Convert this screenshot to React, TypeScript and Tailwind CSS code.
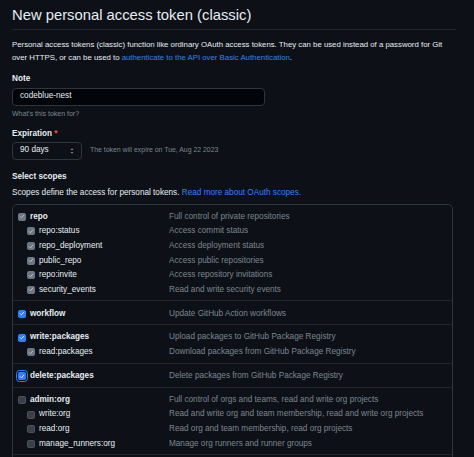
import React from 'react';

type Scope = {
  name: string;
  desc: string;
  sub?: boolean;
  state: 'gray' | 'blue' | 'off';
  focus?: boolean;
};

const groups: Scope[][] = [
  [
    { name: 'repo', desc: 'Full control of private repositories', state: 'gray' },
    { name: 'repo:status', desc: 'Access commit status', sub: true, state: 'gray' },
    { name: 'repo_deployment', desc: 'Access deployment status', sub: true, state: 'gray' },
    { name: 'public_repo', desc: 'Access public repositories', sub: true, state: 'gray' },
    { name: 'repo:invite', desc: 'Access repository invitations', sub: true, state: 'gray' },
    { name: 'security_events', desc: 'Read and write security events', sub: true, state: 'gray' },
  ],
  [{ name: 'workflow', desc: 'Update GitHub Action workflows', state: 'blue' }],
  [
    { name: 'write:packages', desc: 'Upload packages to GitHub Package Registry', state: 'blue' },
    { name: 'read:packages', desc: 'Download packages from GitHub Package Registry', sub: true, state: 'gray' },
  ],
  [{ name: 'delete:packages', desc: 'Delete packages from GitHub Package Registry', state: 'blue', focus: true }],
  [
    { name: 'admin:org', desc: 'Full control of orgs and teams, read and write org projects', state: 'off' },
    { name: 'write:org', desc: 'Read and write org and team membership, read and write org projects', sub: true, state: 'off' },
    { name: 'read:org', desc: 'Read org and team membership, read org projects', sub: true, state: 'off' },
    { name: 'manage_runners:org', desc: 'Manage org runners and runner groups', sub: true, state: 'off' },
  ],
  [
    { name: 'admin:public_key', desc: 'Full control of user public keys', state: 'off' },
    { name: 'write:public_key', desc: 'Write user public keys', sub: true, state: 'off' },
  ],
];

const Check = ({ state, focus }: { state: Scope['state']; focus?: boolean }) => {
  const box =
    state === 'blue'
      ? 'bg-[#2f81f7] border-[#2f81f7]'
      : state === 'gray'
        ? 'bg-[#6e7681] border-[#6e7681]'
        : 'bg-[#3b4048] border-[#4b525b]';
  return (
    <span
      className={`relative flex h-[8px] w-[8px] shrink-0 items-center justify-center rounded-[1.5px] border ${box} ${
        focus ? 'outline outline-[1.5px] outline-offset-[1px] outline-[#2f81f7]' : ''
      }`}
    >
      {state !== 'off' && (
        <svg viewBox="0 0 16 16" className="h-[7px] w-[7px]" fill="none">
          <path
            d="M3.5 8.5l3 3 6-7"
            stroke={state === 'blue' ? '#ffffff' : '#c9d1d9'}
            strokeWidth="2.2"
            strokeLinecap="round"
            strokeLinejoin="round"
          />
        </svg>
      )}
    </span>
  );
};

export default function App() {
  return (
    <div
      className="min-h-screen bg-[#0d1117] px-3 text-[#e6edf3]"
      style={{ fontFamily: '"Liberation Sans", Arial, sans-serif' }}
    >
      <div className="w-[444px]">
        {/* Header */}
        <h1 className="border-b border-[#21262d] pt-[5px] pb-[3px] text-[14.8px] leading-[21px] font-normal">
          New personal access token (classic)
        </h1>

        <p className="mt-[9px] text-[7.8px] leading-[12.8px]">
          Personal access tokens (classic) function like ordinary OAuth access tokens. They can be used instead of a
          password for Git over HTTPS, or can be used to{' '}
          <a className="text-[#2f81f7]">authenticate to the API over Basic Authentication</a>.
        </p>

        {/* Note */}
        <div className="mt-[7px] text-[8.2px] leading-[13px] font-semibold">Note</div>
        <div className="mt-[3px] flex h-[18px] w-[253px] items-center rounded-[4px] border border-[#30363d] bg-[#010409] px-[7px] text-[8.2px]">
          codeblue-nest
        </div>
        <div className="mt-[3px] text-[7px] leading-[10px] text-[#7d8590]">What's this token for?</div>

        {/* Expiration */}
        <div className="mt-[8px] text-[8.2px] leading-[13px] font-semibold">
          Expiration <span className="text-[#f85149]">*</span>
        </div>
        <div className="mt-[2px] flex items-center gap-[8px]">
          <div className="flex h-[18px] w-[70px] items-center justify-between rounded-[4px] border border-[#30363d] bg-[#0d1117] pl-[7px] pr-[5px] text-[8.2px]">
            <span>90 days</span>
            <svg viewBox="0 0 16 16" className="h-[8px] w-[8px]" fill="#7d8590">
              <path d="M5 6l3-3.5L11 6z M5 10l3 3.5 3-3.5z" />
            </svg>
          </div>
          <span className="text-[6.9px] text-[#7d8590]">The token will expire on Tue, Aug 22 2023</span>
        </div>

        {/* Scopes */}
        <div className="mt-[10px] text-[8.2px] leading-[13px] font-semibold">Select scopes</div>
        <div className="mt-[3px] text-[8.2px] leading-[13px]">
          Scopes define the access for personal tokens.{' '}
          <a className="text-[#2f81f7]">Read more about OAuth scopes.</a>
        </div>

        <div className="mt-[5px] w-[441px] rounded-t-[5px] border border-[#30363d]">
          {groups.map((g, gi) => (
            <div key={gi} className={`pt-[5px] pb-[3.3px] ${gi > 0 ? 'border-t border-[#21262d]' : ''}`}>
              {g.map((s) => (
                <div key={s.name} className="flex h-[14.6px] items-center">
                  <div className={`flex w-[156px] shrink-0 items-center gap-[4px] ${s.sub ? 'pl-[14px]' : 'pl-[5px]'}`}>
                    <Check state={s.state} focus={s.focus} />
                    <span className={`text-[8.2px] ${s.sub ? 'font-normal' : 'font-semibold'}`}>{s.name}</span>
                  </div>
                  <span className="text-[8.2px] text-[#7d8590]">{s.desc}</span>
                </div>
              ))}
            </div>
          ))}
        </div>
      </div>
    </div>
  );
}
